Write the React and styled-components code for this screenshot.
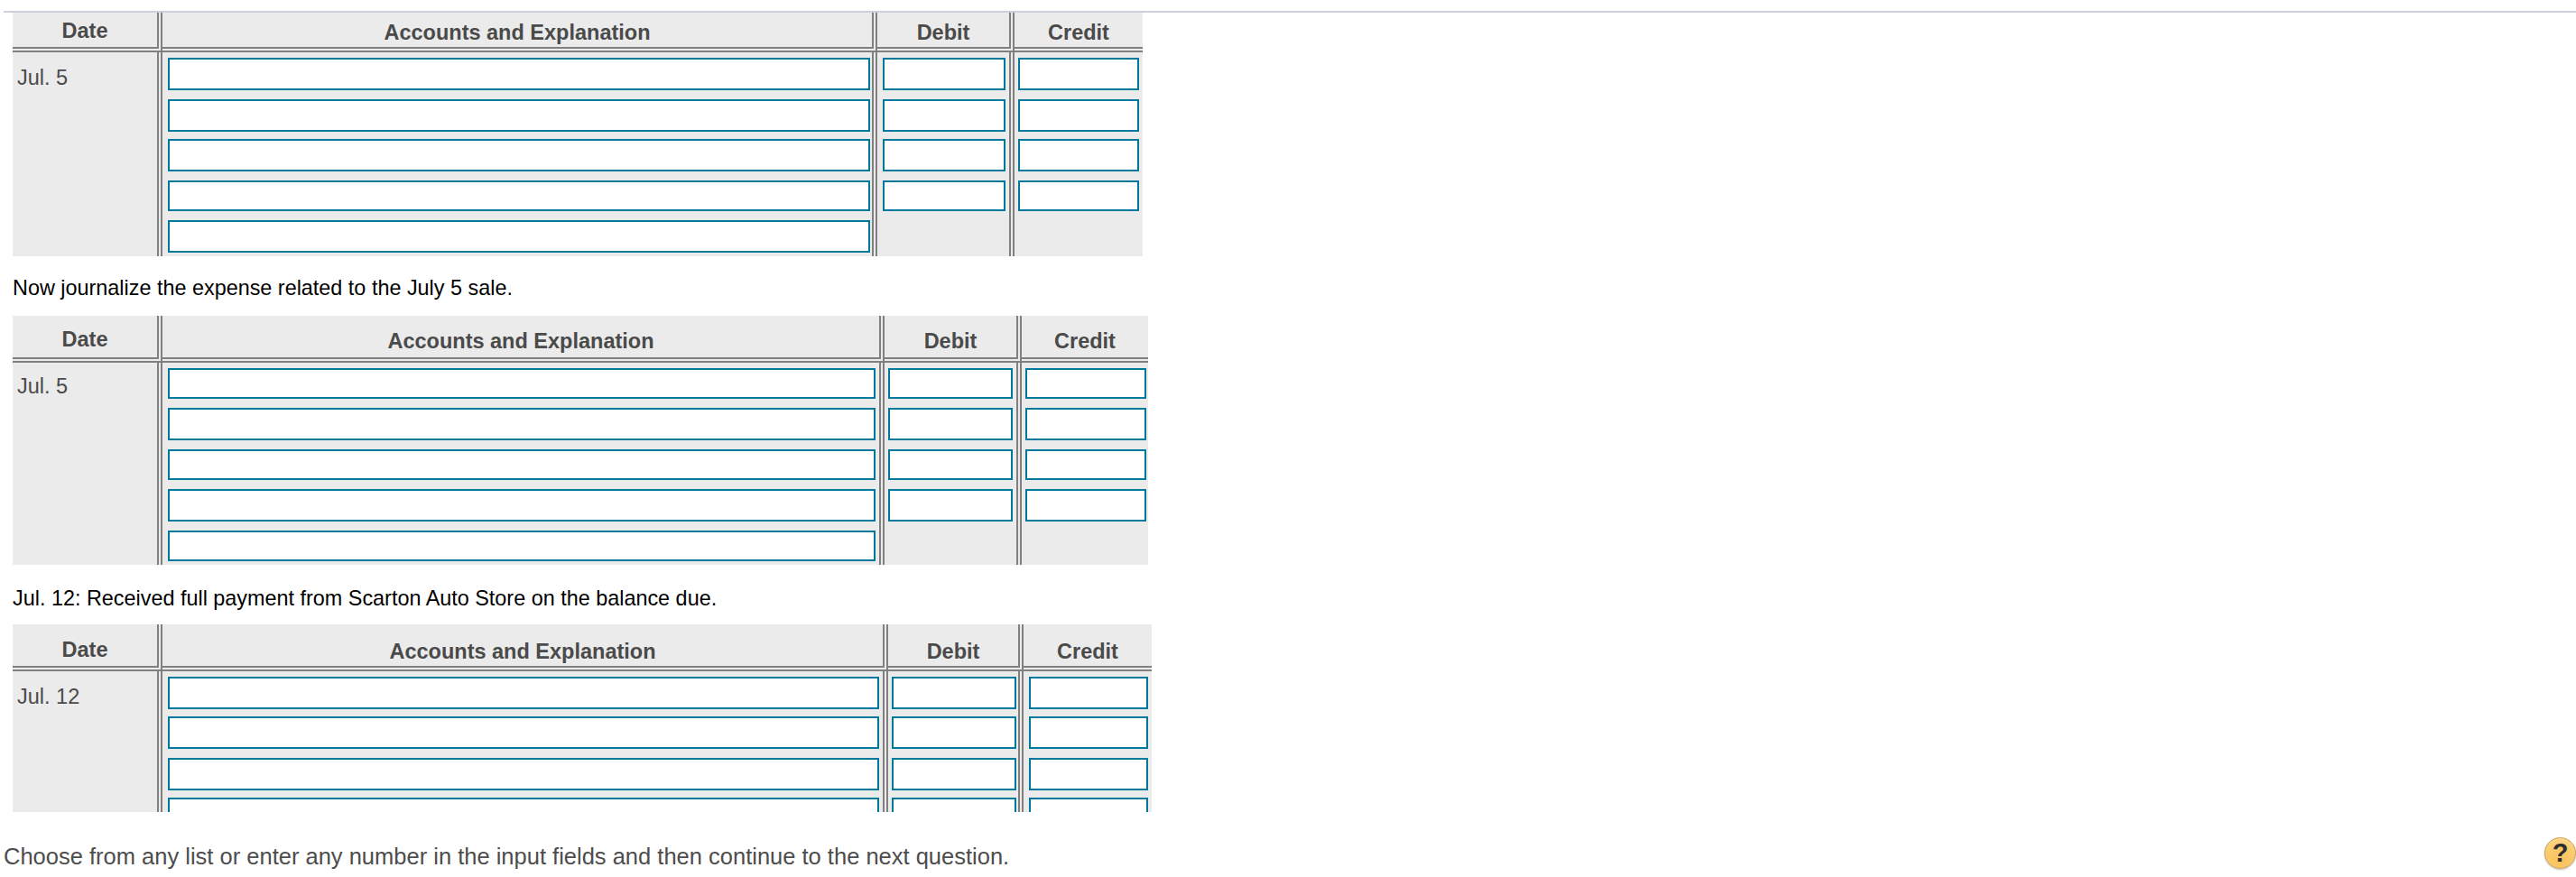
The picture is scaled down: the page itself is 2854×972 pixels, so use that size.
import styled, { createGlobalStyle } from 'styled-components';

const GlobalStyle = createGlobalStyle`
  html, body {
    margin: 0;
    height: 100%;
    overflow: hidden;
    background: #fff;
    font-family: "Liberation Sans", Arial, sans-serif;
  }
`;

const Page = styled.div`
  display: flex;
  flex-direction: column;
  height: 972px;
  padding-top: 12px;
  box-sizing: border-box;
  overflow: hidden;
`;

const TopRule = styled.div`
  height: 2px;
  margin-left: 4px;
  background: #cdd1dd;
  flex-shrink: 0;
`;

const Content = styled.div`
  display: flex;
  flex-direction: column;
  margin-left: 14px;
`;

const Table = styled.div`
  display: flex;
  flex-direction: column;
  width: ${({ $width }) => $width}px;
  height: ${({ $height }) => $height}px;
  background: #ebebeb;
  color: #4a4a4a;
  overflow: hidden;
  flex-shrink: 0;
`;

const HeadRow = styled.div`
  display: flex;
  height: ${({ $height }) => $height}px;
  flex-shrink: 0;
`;

const HeadCell = styled.div`
  display: flex;
  align-items: flex-end;
  justify-content: center;
  box-sizing: border-box;
  width: ${({ $width }) => $width}px;
  padding-bottom: ${({ $pad }) => $pad}px;
  border-bottom: 6px double #808080;
  border-right: ${({ $last }) => ($last ? '0' : '6px double #808080')};
  font-size: 23.5px;
  line-height: 28px;
  font-weight: 700;
`;

const BodyRow = styled.div`
  display: flex;
  flex: 1;
  min-height: 0;
`;

const DateCell = styled.div`
  box-sizing: border-box;
  width: 166px;
  padding: ${({ $top }) => $top}px 0 0 5px;
  border-right: 6px double #808080;
  font-size: 23.5px;
  line-height: 28px;
`;

const InputCell = styled.div`
  display: flex;
  flex-direction: column;
  box-sizing: border-box;
  width: ${({ $width }) => $width}px;
  padding: 6px ${({ $right }) => $right}px 0 ${({ $left }) => $left}px;
  border-right: ${({ $last }) => ($last ? '0' : '6px double #808080')};
`;

const Field = styled.input`
  display: block;
  box-sizing: border-box;
  width: 100%;
  height: ${({ $height }) => $height}px;
  margin: ${({ $gap }) => $gap}px 0 0;
  padding: 0 4px;
  flex-shrink: 0;
  background: #fff;
  border: 2px solid #007a9c;
  border-radius: 0;
  outline: none;
`;

const Prompt = styled.p`
  display: flex;
  align-items: center;
  height: 66px;
  margin: 0;
  padding-top: ${({ $shift }) => $shift}px;
  box-sizing: border-box;
  color: #000;
  font-size: 23.4px;
`;

const Footer = styled.div`
  display: flex;
  align-items: center;
  justify-content: space-between;
  flex: 1;
  margin-left: 4px;
  padding-top: 26px;
  color: #4d4d4d;
  font-size: 25.5px;
`;

const HelpButton = styled.div`
  display: flex;
  align-items: center;
  justify-content: center;
  box-sizing: border-box;
  width: 35px;
  height: 35px;
  margin-bottom: 7px;
  border-radius: 50%;
  border: 1px solid #c9a055;
  background: radial-gradient(circle at 50% 75%, #f9c25a 0%, #fbcb6f 55%, #fde09c 100%);
  box-shadow: 0 1px 2px rgba(0, 0, 0, 0.25);
  color: #2e2e2e;
  font-size: 29px;
  font-weight: 700;
  flex-shrink: 0;
`;

const tables = [
  {
    date: 'Jul. 5',
    width: 1252,
    height: 270,
    headHeight: 44,
    datePad: 4,
    headPad: 2,
    dateTop: 14,
    columns: [
      { width: 792, left: 6, right: 2 },
      { width: 152, left: 6, right: 4 },
      { width: 142, left: 4, right: 4, last: true },
    ],
    rows: [[36, 0], [36, 10], [36, 8], [34, 10], [36, 10]],
  },
  {
    date: 'Jul. 5',
    width: 1258,
    height: 276,
    headHeight: 52,
    datePad: 6,
    headPad: 4,
    dateTop: 12,
    columns: [
      { width: 800, left: 6, right: 4 },
      { width: 152, left: 4, right: 4 },
      { width: 140, left: 4, right: 2, last: true },
    ],
    rows: [[34, 0], [36, 10], [34, 10], [36, 10], [34, 10]],
  },
  {
    date: 'Jul. 12',
    width: 1262,
    height: 208,
    headHeight: 52,
    datePad: 4,
    headPad: 2,
    dateTop: 14,
    columns: [
      { width: 804, left: 6, right: 4 },
      { width: 150, left: 4, right: 2 },
      { width: 142, left: 6, right: 4, last: true },
    ],
    rows: [[36, 0], [36, 8], [36, 10], [36, 8]],
  },
];

const headings = ['Accounts and Explanation', 'Debit', 'Credit'];

const JournalTable = ({ table }) => (
  <Table $width={table.width} $height={table.height}>
    <HeadRow $height={table.headHeight}>
      <HeadCell $width={166} $pad={table.datePad}>Date</HeadCell>
      {table.columns.map((col, i) => (
        <HeadCell key={headings[i]} $width={col.width} $pad={table.headPad} $last={col.last}>
          {headings[i]}
        </HeadCell>
      ))}
    </HeadRow>
    <BodyRow>
      <DateCell $top={table.dateTop}>{table.date}</DateCell>
      {table.columns.map((col, i) => (
        <InputCell key={headings[i]} $width={col.width} $left={col.left} $right={col.right} $last={col.last}>
          {table.rows.map(([height, gap], r) =>
            // the fifth line only exists in the accounts column
            i > 0 && r === 4 ? null : <Field key={r} $height={height} $gap={gap} aria-label={headings[i]} />
          )}
        </InputCell>
      ))}
    </BodyRow>
  </Table>
);

const App = () => (
  <Page>
    <GlobalStyle />
    <TopRule />
    <Content>
      <JournalTable table={tables[0]} />
      <Prompt $shift={4}>Now journalize the expense related to the July 5 sale.</Prompt>
      <JournalTable table={tables[1]} />
      <Prompt $shift={8}>Jul. 12: Received full payment from Scarton Auto Store on the balance due.</Prompt>
      <JournalTable table={tables[2]} />
    </Content>
    <Footer>
      <span>Choose from any list or enter any number in the input fields and then continue to the next question.</span>
      <HelpButton>?</HelpButton>
    </Footer>
  </Page>
);

export default App;
